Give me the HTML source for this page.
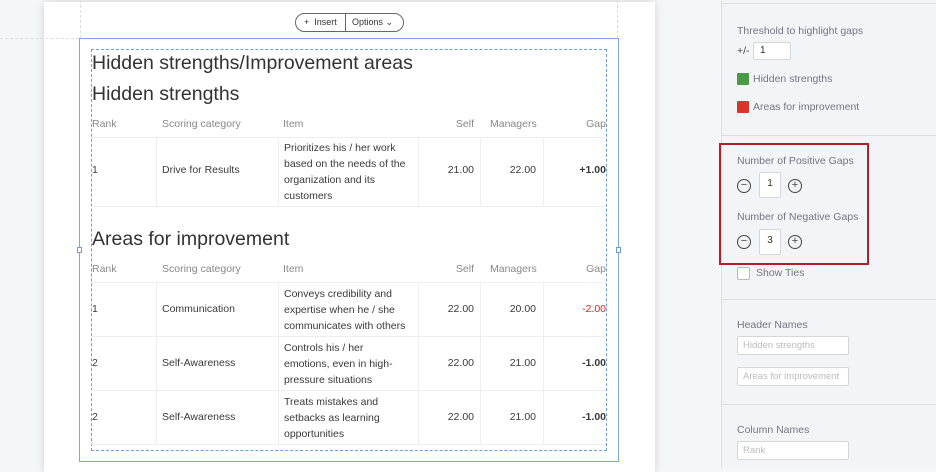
<!DOCTYPE html>
<html><head><style>
*{margin:0;padding:0;box-sizing:border-box}
body{width:936px;height:468px;overflow:hidden;background:#f5f6f8;font-family:"Liberation Sans",sans-serif;position:relative;color:#333}
.a{position:absolute}
.card{left:44px;top:2px;width:611px;height:470px;background:#fff;box-shadow:0 0 8px rgba(0,0,0,.15)}
.panel{left:721px;top:0;width:215px;height:468px;background:#f3f4f7;border-left:1px solid #dcdde0}
.sep{left:721px;width:215px;height:1px;background:#dcdde0}
.lbl{font-size:10.5px;color:#737680}
.inp{background:#fff;border:1px solid #d4d6da;border-radius:2px;font-size:9.5px;color:#bbb;padding:3px 5px}
.circ{width:14px;height:14px;border:1.3px solid #444;border-radius:50%;font-size:11px;line-height:11px;text-align:center;color:#444}
.t{font-size:10.5px;color:#3a3a3a}
.h{font-size:10.5px;color:#888}
.vl{width:1px;background:#eee}
.hl{height:1px;background:#eee;left:91px;width:515px}
.hd{font-size:19.5px;color:#333}
</style></head><body>
<div class="a card"></div>
<div class="a" style="left:80px;top:0;height:38px;border-left:1px dashed #ddd"></div>
<div class="a" style="left:617px;top:0;height:38px;border-left:1px dashed #ddd"></div>
<div class="a" style="left:0;top:38px;width:79px;border-top:1px dashed #ddd"></div>
<div class="a" style="left:295px;top:13px;width:109px;height:19px;border:1px solid #666;border-radius:10px;font-size:9px;line-height:17px;color:#333">
<span style="position:absolute;left:8px">+&nbsp; Insert</span>
<span style="position:absolute;left:49px;top:0;height:17px;border-left:1px solid #666"></span>
<span style="position:absolute;left:56px">Options ⌄</span></div>
<div class="a" style="left:79px;top:38px;width:540px;height:424px;border:1px solid #7fa6e6"></div>
<div class="a" style="left:77px;top:247px;width:5px;height:6px;border:1px solid #6b9be6;background:#fff"></div>
<div class="a" style="left:616px;top:247px;width:5px;height:6px;border:1px solid #6b9be6;background:#fff"></div>
<div class="a" style="left:91px;top:49px;width:516px;height:402px;border:1px dashed #6b9be6"></div>
<div class="a hd" style="left:92px;top:52px">Hidden strengths/Improvement areas</div>
<div class="a hd" style="left:92px;top:83px">Hidden strengths</div>
<div class="a hd" style="left:92px;top:228px">Areas for improvement</div>

<div class="a h" style="left:92px;top:118px">Rank</div>
<div class="a h" style="left:162px;top:118px">Scoring category</div>
<div class="a h" style="left:283px;top:118px">Item</div>
<div class="a h" style="left:440px;top:118px;width:34px;text-align:right">Self</div>
<div class="a h" style="left:490px;top:118px">Managers</div>
<div class="a h" style="left:570px;top:118px;width:36px;text-align:right">Gap</div>
<div class="a hl" style="top:137px"></div><div class="a hl" style="top:206px"></div>
<div class="a vl" style="left:156px;top:137px;height:69px"></div><div class="a vl" style="left:278px;top:137px;height:69px"></div>
<div class="a vl" style="left:418px;top:137px;height:69px"></div><div class="a vl" style="left:480px;top:137px;height:69px"></div>
<div class="a vl" style="left:543px;top:137px;height:69px"></div>
<div class="a t" style="left:92px;top:164px">1</div>
<div class="a t" style="left:162px;top:164px">Drive for Results</div>
<div class="a t" style="left:284px;top:140px;width:135px;line-height:16px">Prioritizes his / her work based on the needs of the organization and its customers</div>
<div class="a t" style="left:430px;top:164px;width:44px;text-align:right">21.00</div>
<div class="a t" style="left:490px;top:164px;width:46px;text-align:right">22.00</div>
<div class="a t" style="left:560px;top:164px;width:46px;text-align:right;font-weight:bold">+1.00</div>

<div class="a h" style="left:92px;top:263px">Rank</div>
<div class="a h" style="left:162px;top:263px">Scoring category</div>
<div class="a h" style="left:283px;top:263px">Item</div>
<div class="a h" style="left:440px;top:263px;width:34px;text-align:right">Self</div>
<div class="a h" style="left:490px;top:263px">Managers</div>
<div class="a h" style="left:570px;top:263px;width:36px;text-align:right">Gap</div>
<div class="a hl" style="top:282px"></div><div class="a hl" style="top:336px"></div><div class="a hl" style="top:390px"></div><div class="a hl" style="top:444px"></div>
<div class="a vl" style="left:156px;top:282px;height:162px"></div><div class="a vl" style="left:278px;top:282px;height:162px"></div>
<div class="a vl" style="left:418px;top:282px;height:162px"></div><div class="a vl" style="left:480px;top:282px;height:162px"></div>
<div class="a vl" style="left:543px;top:282px;height:162px"></div>

<div class="a t" style="left:92px;top:303px">1</div>
<div class="a t" style="left:162px;top:303px">Communication</div>
<div class="a t" style="left:284px;top:286px;width:135px;line-height:16px">Conveys credibility and expertise when he / she communicates with others</div>
<div class="a t" style="left:430px;top:303px;width:44px;text-align:right">22.00</div>
<div class="a t" style="left:490px;top:303px;width:46px;text-align:right">20.00</div>
<div class="a t" style="left:560px;top:303px;width:46px;text-align:right;color:#e02020">-2.00</div>

<div class="a t" style="left:92px;top:357px">2</div>
<div class="a t" style="left:162px;top:357px">Self-Awareness</div>
<div class="a t" style="left:284px;top:340px;width:125px;line-height:16px">Controls his / her emotions, even in high-pressure situations</div>
<div class="a t" style="left:430px;top:357px;width:44px;text-align:right">22.00</div>
<div class="a t" style="left:490px;top:357px;width:46px;text-align:right">21.00</div>
<div class="a t" style="left:560px;top:357px;width:46px;text-align:right;font-weight:bold">-1.00</div>

<div class="a t" style="left:92px;top:411px">2</div>
<div class="a t" style="left:162px;top:411px">Self-Awareness</div>
<div class="a t" style="left:284px;top:394px;width:125px;line-height:16px">Treats mistakes and setbacks as learning opportunities</div>
<div class="a t" style="left:430px;top:411px;width:44px;text-align:right">22.00</div>
<div class="a t" style="left:490px;top:411px;width:46px;text-align:right">21.00</div>
<div class="a t" style="left:560px;top:411px;width:46px;text-align:right;font-weight:bold">-1.00</div>

<div class="a panel"></div>
<div class="a sep" style="top:3px"></div><div class="a sep" style="top:135px"></div>
<div class="a sep" style="top:299px"></div><div class="a sep" style="top:404px"></div>
<div class="a lbl" style="left:737px;top:25px">Threshold to highlight gaps</div>
<div class="a lbl" style="left:737px;top:45px;color:#444">+/-</div>
<div class="a inp" style="left:753px;top:42px;width:38px;height:18px;color:#333;font-size:10px;padding:2px 6px">1</div>
<div class="a" style="left:737px;top:73px;width:12px;height:12px;background:#4a9a44;border-radius:1px"></div>
<div class="a lbl" style="left:753px;top:73px">Hidden strengths</div>
<div class="a" style="left:737px;top:101px;width:12px;height:12px;background:#d8352b;border-radius:1px"></div>
<div class="a lbl" style="left:753px;top:101px">Areas for improvement</div>
<div class="a" style="left:719px;top:143px;width:150px;height:122px;border:2px solid #b0212c"></div>
<div class="a lbl" style="left:737px;top:155px">Number of Positive Gaps</div>
<div class="a circ" style="left:737px;top:179px">−</div>
<div class="a inp" style="left:759px;top:172px;width:22px;height:26px;color:#333;font-size:10px;text-align:center;line-height:18px;padding:2px">1</div>
<div class="a circ" style="left:788px;top:179px">+</div>
<div class="a lbl" style="left:737px;top:211px">Number of Negative Gaps</div>
<div class="a circ" style="left:737px;top:235px">−</div>
<div class="a inp" style="left:759px;top:229px;width:22px;height:26px;color:#333;font-size:10px;text-align:center;line-height:18px;padding:2px">3</div>
<div class="a circ" style="left:788px;top:235px">+</div>
<div class="a" style="left:737px;top:267px;width:13px;height:13px;background:#fff;border:1px solid #bbb;border-radius:2px"></div>
<div class="a lbl" style="left:756px;top:267px">Show Ties</div>
<div class="a lbl" style="left:737px;top:319px">Header Names</div>
<div class="a inp" style="left:737px;top:336px;width:112px;height:19px">Hidden strengths</div>
<div class="a inp" style="left:737px;top:367px;width:112px;height:19px">Areas for improvement</div>
<div class="a lbl" style="left:737px;top:424px">Column Names</div>
<div class="a inp" style="left:737px;top:441px;width:112px;height:19px">Rank</div>
</body></html>
